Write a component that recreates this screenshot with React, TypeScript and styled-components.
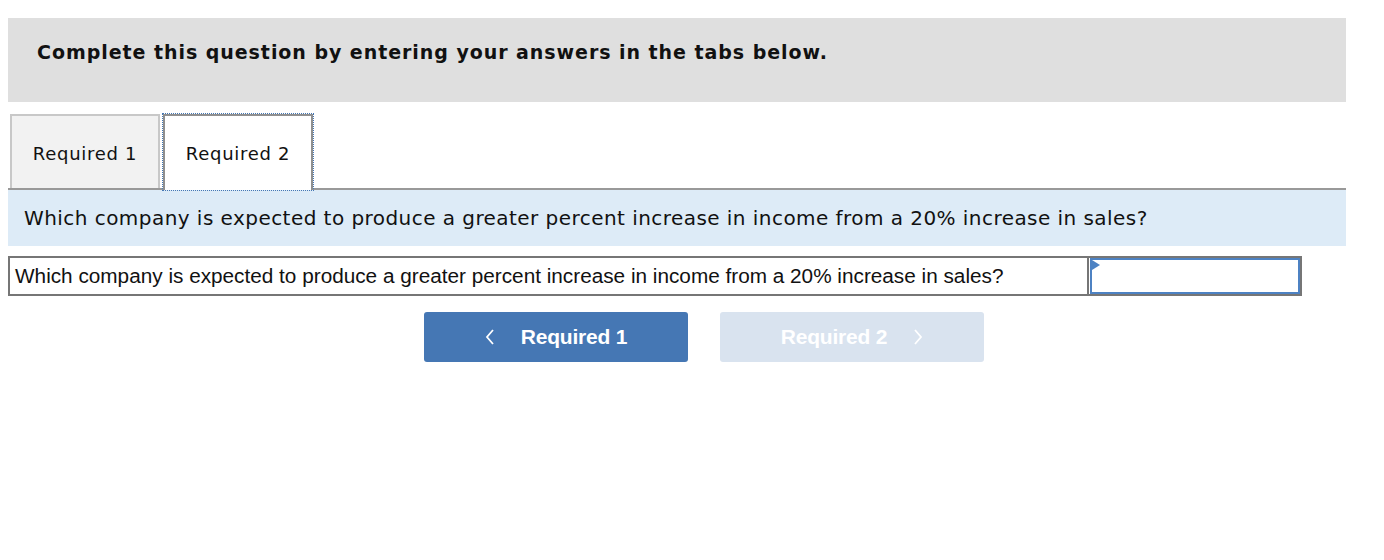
import styled, { createGlobalStyle } from "styled-components";

const GlobalStyle = createGlobalStyle`
  body {
    margin: 8px;
    background: #fff;
    font-family: "DejaVu Sans", Verdana, sans-serif;
    color: #111;
  }
`;

const QUESTION =
  "Which company is expected to produce a greater percent increase in income from a 20% increase in sales?";

export default function App() {
  return (
    <>
      <GlobalStyle />
      <Page>
        <Instructions>Complete this question by entering your answers in the tabs below.</Instructions>
        <TabBar>
          <Tab>Required 1</Tab>
          <Tab $active>Required 2</Tab>
        </TabBar>
        <Prompt>{QUESTION}</Prompt>
        <AnswerRow>
          <QuestionCell>{QUESTION}</QuestionCell>
          <AnswerCell>
            <AnswerInput type="text" />
            <Marker />
          </AnswerCell>
        </AnswerRow>
        <NavRow>
          <NavButton>
            <Chevron dir="left" />
            Required 1
          </NavButton>
          <NavButton $disabled>
            Required 2
            <Chevron dir="right" />
          </NavButton>
        </NavRow>
      </Page>
    </>
  );
}

const Chevron = ({ dir }: { dir: "left" | "right" }) => (
  <svg width="10" height="18" viewBox="0 0 10 18">
    <polyline
      points={dir === "left" ? "8,2 2,9 8,16" : "2,2 8,9 2,16"}
      fill="none"
      stroke="#fff"
      strokeWidth="1.8"
    />
  </svg>
);

const Page = styled.div`
  width: 1338px;
  padding-top: 10px;
`;

const Instructions = styled.div`
  background: #dfdfdf;
  height: 84px;
  box-sizing: border-box;
  padding: 23px 29px 0;
  font-weight: bold;
  font-size: 19px;
  letter-spacing: 0.95px;
`;

const TabBar = styled.div`
  display: flex;
  align-items: flex-end;
  height: 74px;
  margin-top: 12px;
  padding-left: 2px;
  gap: 3px;
  border-bottom: 2px solid #999;
`;

const Tab = styled.div<{ $active?: boolean }>`
  width: 150px;
  height: ${(p) => (p.$active ? "76px" : "74px")};
  margin-bottom: ${(p) => (p.$active ? "-2px" : "0")};
  box-sizing: border-box;
  display: flex;
  align-items: center;
  justify-content: center;
  padding-top: ${(p) => (p.$active ? "0" : "2px")};
  font-size: 18px;
  letter-spacing: 0.7px;
  background: ${(p) => (p.$active ? "#fff" : "#f2f2f2")};
  border: 2px solid ${(p) => (p.$active ? "#8f8f8f" : "#c8c8c8")};
  border-bottom: none;
  outline: ${(p) => (p.$active ? "1px dotted #4577b4" : "none")};
  outline-offset: 0;
`;

const Prompt = styled.div`
  background: #ddebf7;
  height: 56px;
  box-sizing: border-box;
  display: flex;
  align-items: center;
  padding-left: 16px;
  font-size: 20px;
  letter-spacing: 0.45px;
`;

const AnswerRow = styled.div`
  display: flex;
  width: 1294px;
  height: 40px;
  box-sizing: border-box;
  margin-top: 10px;
  border: 2px solid #767676;
`;

const QuestionCell = styled.div`
  flex: 1;
  display: flex;
  align-items: center;
  padding-left: 5px;
  border-right: 2px solid #767676;
  font-family: "Liberation Sans", Arial, sans-serif;
  font-size: 20.75px;
`;

const AnswerCell = styled.div`
  position: relative;
  width: 210px;
  padding: 0 0 0 1px;
`;

const AnswerInput = styled.input`
  width: 100%;
  height: 100%;
  box-sizing: border-box;
  margin: 0;
  border: 2px solid #4d82c3;
  outline: none;
  background: #fff;
`;

const Marker = styled.span`
  position: absolute;
  left: 3px;
  top: 2px;
  width: 0;
  height: 0;
  border-top: 5px solid transparent;
  border-bottom: 5px solid transparent;
  border-left: 8px solid #4d82c3;
`;

const NavRow = styled.div`
  display: flex;
  gap: 32px;
  margin-top: 16px;
  padding-left: 416px;
`;

const NavButton = styled.div<{ $disabled?: boolean }>`
  width: 264px;
  height: 50px;
  border-radius: 3px;
  display: flex;
  align-items: center;
  justify-content: center;
  gap: 26px;
  background: ${(p) => (p.$disabled ? "#d9e3ef" : "#4577b4")};
  color: #fff;
  font-family: "Liberation Sans", Arial, sans-serif;
  font-weight: bold;
  font-size: 21px;
  letter-spacing: -0.2px;
`;
